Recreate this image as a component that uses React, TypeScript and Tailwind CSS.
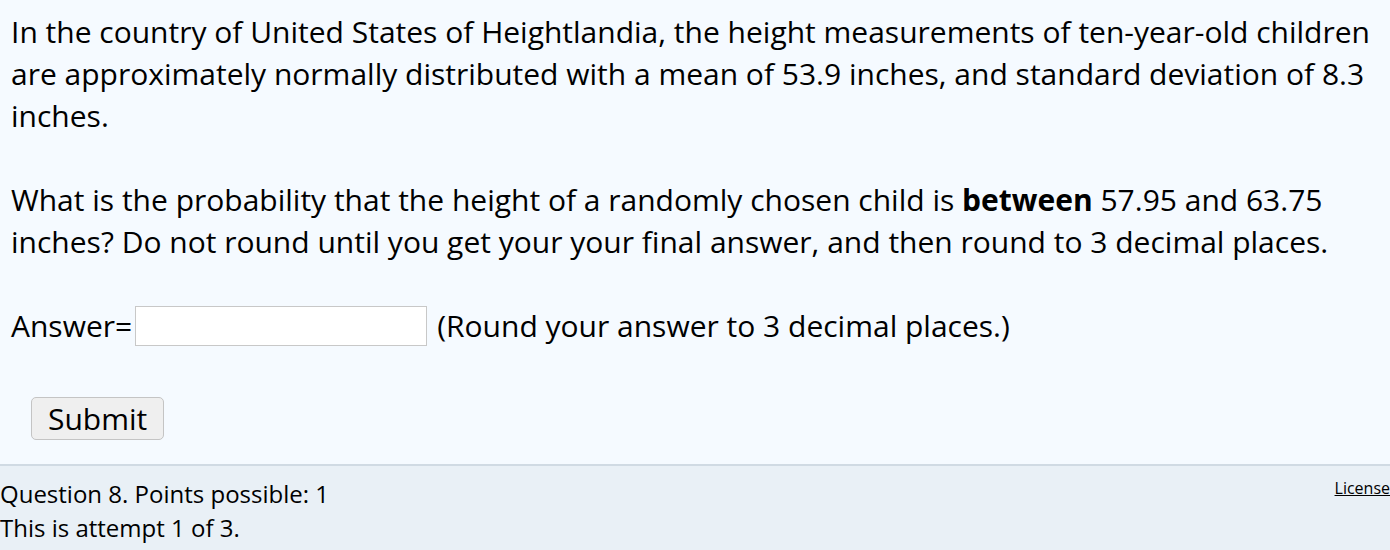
export default function App() {
  return (
    <div className="w-[1390px] h-[550px] flex flex-col bg-[#f5faff] text-black font-['Open_Sans',sans-serif] overflow-hidden">
      <div className="pl-[11px] pr-[14px] pt-[11px] text-[30px] leading-[42px]">
        <p>
          In the country of United States of Heightlandia, the height measurements of ten-year-old children are
          approximately normally distributed with a mean of 53.9 inches, and standard deviation of 8.3 inches.
        </p>
        <p className="mt-[42px]">
          What is the probability that the height of a randomly chosen child is <b>between</b> 57.95 and 63.75
          inches? Do not round until you get your your final answer, and then round to 3 decimal places.
        </p>
        <div className="mt-[42px] flex items-center h-[42px]">
          <span>Answer=</span>
          <input
            type="text"
            className="ml-[3px] w-[292px] h-[40px] bg-white border border-[#c8c8c8] outline-none"
          />
          <span className="ml-[10px]">(Round your answer to 3 decimal places.)</span>
        </div>
        <div className="mt-[50px] pl-[20px]">
          <button className="h-[43px] px-[16px] text-[30px] leading-[40px] bg-[#efefef] border border-[#c4c4c4] rounded-[5px]">
            Submit
          </button>
        </div>
      </div>
      <div className="mt-[24px] flex-1 bg-[#e9f0f6] border-t-[2px] border-[#d0dae3] flex justify-between">
        <div className="pt-[11px] text-[24px] leading-[34px]">
          <div>Question 8. Points possible: 1</div>
          <div>This is attempt 1 of 3.</div>
        </div>
        <a href="#" className="mt-[11px] text-[16px] leading-[22px] underline text-black">
          License
        </a>
      </div>
    </div>
  );
}
